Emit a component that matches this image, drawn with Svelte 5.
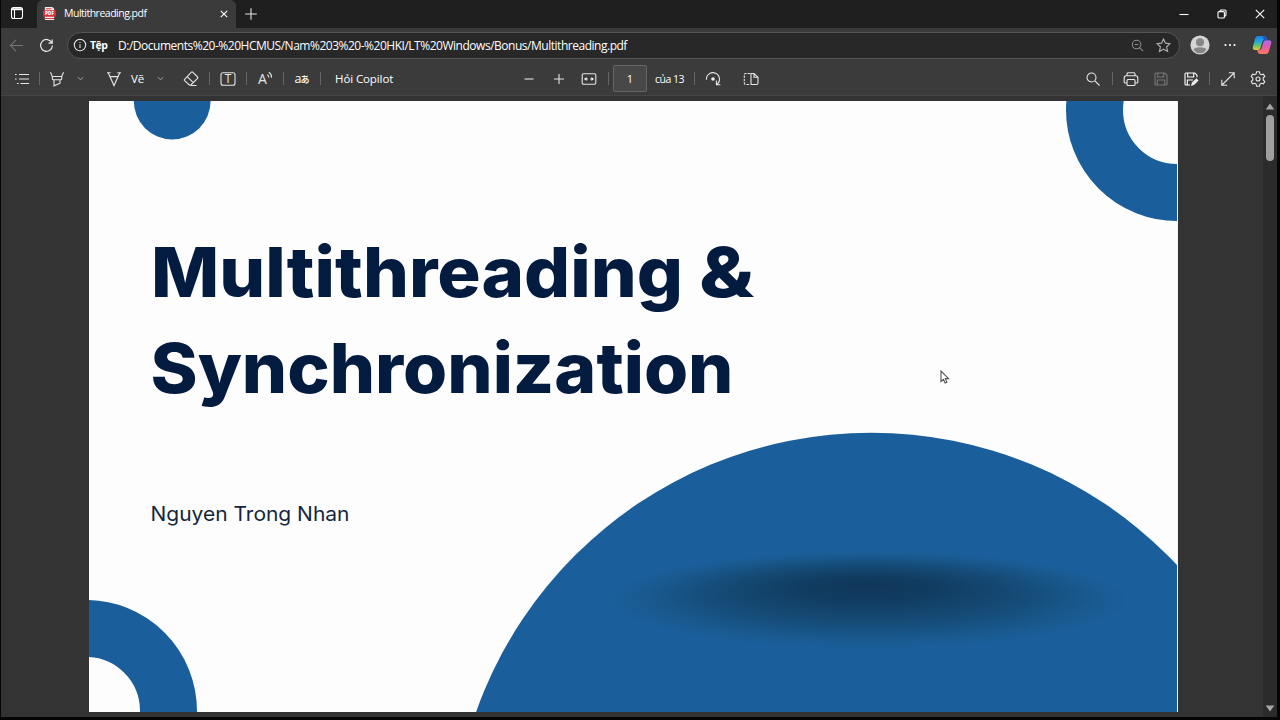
<script lang="ts">
    let fileName = "Multithreading.pdf";
    let url =
        "D:/Documents%20-%20HCMUS/Nam%203%20-%20HKI/LT%20Windows/Bonus/Multithreading.pdf";
    let page = "1";
    let pageCount = 13;
</script>

{#snippet chevron()}
    <svg class="chevron" viewBox="0 0 8 8"><path d="M1 2.5 4 5.5 7 2.5" /></svg>
{/snippet}

<div class="window">
    <header class="tabs">
        <div class="tab-actions">
            <svg class="icon bright" viewBox="0 0 16 16">
                <rect x="2.5" y="2.5" width="11" height="11" rx="2" />
                <path d="M3 4.2h10" stroke-width="2" />
                <path d="M5.5 5v8.5" />
            </svg>
        </div>
        <div class="tab">
            <svg class="pdf" viewBox="0 0 14 14">
                <path d="M2 0h8l2 2v12H2z" fill="#f5e9e9" />
                <path d="M3 2h6M2 12.5h10" stroke="#d33a40" />
                <rect y="3.5" width="14" height="7" rx="1" fill="#d92e3a" />
                <text x="7" y="8.9" text-anchor="middle">PDF</text>
            </svg>
            <span class="tab-title">{fileName}</span>
            <svg class="tab-close" viewBox="0 0 8 8"><path d="M.8.8 7.2 7.2M7.2.8.8 7.2" /></svg>
        </div>
        <svg class="new-tab" viewBox="0 0 12 12"><path d="M6 .2v11.6M.2 6h11.6" /></svg>
        <div class="controls">
            <svg viewBox="0 0 10 10"><path d="M.5 5.5h9" /></svg>
            <svg viewBox="0 0 10 10">
                <rect x="1" y="2.6" width="6.4" height="6.4" rx="1" />
                <path d="M3 2.4V2q0-1 1-1h4q1 0 1 1v4q0 1-1 1h-.4" />
            </svg>
            <svg viewBox="0 0 10 10"><path d="M.8.8 9.2 9.2M9.2.8.8 9.2" /></svg>
        </div>
    </header>

    <div class="address-row">
        <svg class="nav dim" viewBox="0 0 16 16"><path d="M15 8H1.5M7.5 2 1.5 8l6 6" /></svg>
        <svg class="nav" viewBox="0 0 16 16">
            <path d="M13.7 5.2A6.3 6.3 0 1 0 14.3 8M14.1 1.5v4h-4" stroke-width="1.3" />
        </svg>
        <div class="address">
            <svg class="info" viewBox="0 0 14 14">
                <circle cx="7" cy="7" r="5.7" />
                <path d="M7 6.3v3.6M7 4v1.1" />
            </svg>
            <span class="scheme">Tệp</span>
            <span class="url">{url}</span>
            <svg class="address-icon" viewBox="0 0 14 14">
                <circle cx="6" cy="6" r="4.6" />
                <path d="M9.3 9.3 13 13M4 6h4" />
            </svg>
            <svg class="address-icon star" viewBox="0 0 14 14">
                <path
                    d="M7 .9 8.8 4.8l4.3.5-3.2 2.9.9 4.3L7 10.4l-3.8 2.1.9-4.3L.9 5.3l4.3-.5z"
                />
            </svg>
        </div>
        <svg class="avatar" viewBox="0 0 20 20">
            <circle cx="10" cy="10" r="9.6" fill="#d4d4d4" />
            <circle cx="10" cy="7.3" r="4" fill="#858585" />
            <path d="M3.6 14.4Q5 12.2 10 12.2t6.4 2.2Q14 18.3 10 18.3t-6.4-3.9z" fill="#858585" />
        </svg>
        <svg class="more" viewBox="0 0 12 4">
            <circle cx="1.5" cy="2" r="1.1" />
            <circle cx="6" cy="2" r="1.1" />
            <circle cx="10.5" cy="2" r="1.1" />
        </svg>
        <svg class="copilot" viewBox="0 0 20 20">
            <defs>
                <linearGradient id="cool" x1="0" y1="0" x2="0" y2="1">
                    <stop offset="0" stop-color="#1b83e8" />
                    <stop offset=".4" stop-color="#23a9d8" />
                    <stop offset=".7" stop-color="#67c56c" />
                    <stop offset="1" stop-color="#e9cf35" />
                </linearGradient>
                <linearGradient id="warm" x1="0" y1="0" x2="0" y2="1">
                    <stop offset="0" stop-color="#ad6af0" />
                    <stop offset=".5" stop-color="#e45aab" />
                    <stop offset="1" stop-color="#fa7a56" />
                </linearGradient>
            </defs>
            <path
                d="M6 1h6.4q1.6 0 2.2 1.8l.8 2.5H12q-1.3 0-1.7 1.4L8.4 13q-.6 2-2.4 2H3Q.4 15 .8 12L3.2 3.2Q4 1 6 1z"
                fill="url(#cool)"
            />
            <path
                d="M14 19H8q-1.6 0-2.2-1.8L5 14.8h2.5q1.5 0 2-1.6l1.9-6.1Q12 5.2 14 5.2h3q2.8 0 2.2 3l-2.4 8.6Q16 19 14 19z"
                fill="url(#warm)"
            />
            <path d="M10.5 1h2q1.5 0 2.1 1.8l.8 2.5H12z" fill="#2355bf" />
        </svg>
    </div>

    <div class="toolbar">
        <div class="group left">
            <div class="tool">
                <svg class="icon" viewBox="0 0 16 16">
                    <path d="M5 3.5h10M5 8h10M6.5 12.5H15M1 3.5h1.6M1 8h1.6M3 12.5h1.6" />
                </svg>
            </div>
            <i class="sep narrow"></i>
            <div class="tool">
                <svg class="icon" viewBox="0 0 16 16">
                    <path d="M1.5 1.2 3.3 5.5h9.4l1.8-4.3M3.3 5.5v2.3q0 1 1 1h7.4q1 0 1-1V5.5M5 9v5.8l6-2.6V9" />
                </svg>
            </div>
            <div class="drop">{@render chevron()}</div>
            <div class="tool pen">
                <svg class="icon" viewBox="0 0 16 16">
                    <path d="M1 1.8h3.6M11.4 1.8H15M2.3 2l5.7 12.6L13.7 2M4 5.6h8" />
                </svg>
            </div>
            <span class="draw">Vẽ</span>
            <div class="drop">{@render chevron()}</div>
            <div class="tool eraser">
                <svg class="icon" viewBox="0 0 16 16">
                    <path d="M9.7 1.2 14.6 6q.6.7 0 1.3l-6.8 6.7q-.7.6-1.4 0L1.6 9.7q-.7-.7 0-1.4l6.8-7.1q.7-.6 1.3 0zM4.2 5.6l6.1 6.1M8 14.5h5.5" />
                </svg>
            </div>
            <i class="sep"></i>
            <div class="tool">
                <svg class="icon" viewBox="0 0 16 16">
                    <rect x="1" y="1.8" width="14" height="12.4" rx="2" />
                    <text class="letter" x="8" y="12.2" font-size="12" text-anchor="middle">T</text>
                </svg>
            </div>
            <i class="sep"></i>
            <div class="tool">
                <svg class="icon" viewBox="0 0 16 16">
                    <text class="letter" x="1" y="13.2" font-size="14">A</text>
                    <path d="M10.3 3.6q1.6 1.2 1.5 3M11.9 1.2q2.8 2 2.6 5.4" />
                </svg>
            </div>
            <i class="sep"></i>
            <div class="tool translate"><span>a</span><span class="kana">あ</span></div>
            <i class="sep"></i>
            <span class="ask">Hỏi Copilot</span>
        </div>

        <div class="group middle">
            <div class="tool wide">
                <svg class="icon" viewBox="0 0 16 16"><path d="M3.5 8h9" /></svg>
            </div>
            <div class="tool wide">
                <svg class="icon" viewBox="0 0 16 16"><path d="M8 3v10M3 8h10" /></svg>
            </div>
            <div class="tool wide">
                <svg class="icon" viewBox="0 0 16 16">
                    <rect x="1.2" y="2.7" width="13.6" height="10.6" rx="1.2" />
                    <path d="M3.8 8h3M9.2 8h3" />
                    <path d="M3 8 5.6 5.9v4.2zM13 8l-2.6-2.1v4.2z" class="solid" />
                </svg>
            </div>
            <i class="sep"></i>
            <div class="page-number">{page}</div>
            <span class="page-count">của {pageCount}</span>
            <i class="sep"></i>
            <div class="tool">
                <svg class="icon" viewBox="0 0 16 16">
                    <path d="M1.5 8.8A6.5 6.5 0 1 1 11.8 13.4M11.4 9.6v4.2h4" />
                    <circle cx="8" cy="8" r="1.8" class="solid" />
                </svg>
            </div>
            <div class="tool view">
                <svg class="icon" viewBox="0 0 16 16">
                    <path d="M7 2.5H3Q1.3 2.5 1.3 4v8q0 1.5 1.7 1.5h4" stroke-dasharray="2.4 1" />
                    <path d="M8 2.5h3l4 3.8V12q0 1.5-1.6 1.5H8zM11 2.5v3.8h4" />
                </svg>
            </div>
        </div>

        <div class="group right">
            <div class="tool wide">
                <svg class="icon" viewBox="0 0 16 16">
                    <circle cx="6.5" cy="6.5" r="4.5" />
                    <path d="m9.9 9.9 4.6 4.6" />
                </svg>
            </div>
            <i class="sep print-sep"></i>
            <div class="tool wide">
                <svg class="icon" viewBox="0 0 16 16">
                    <path d="M4 4.8V3q0-1.2 1-1.2h6q1 0 1 1.2v1.8M4 12H2.2q-1 0-1-1V7q0-2.2 2-2.2h9.6q2 0 2 2.2v4q0 1-1 1H12" />
                    <rect x="4" y="8.5" width="8" height="6" rx="1" />
                </svg>
            </div>
            <div class="tool wide faded">
                <svg class="icon" viewBox="0 0 16 16">
                    <path d="M2 3q0-1 1-1h8.8L14 4.2V13q0 1-1 1H3q-1 0-1-1zM4.7 2v4h6V2M4.3 14V9h7.4v5" />
                </svg>
            </div>
            <div class="tool wide">
                <svg class="icon bright" viewBox="0 0 16 16">
                    <path d="M7 14H3q-1 0-1-1V3q0-1 1-1h8.8L14 4.2v2M4.7 2v4h6V2M4.3 14V9H10" />
                    <path d="m8 15 .8-3.2 4.6-4.6 2.2 2.2-4.6 4.6z" class="solid" />
                </svg>
            </div>
            <i class="sep narrow"></i>
            <div class="tool wide">
                <svg class="icon" viewBox="0 0 16 16">
                    <path d="M2 14 14 2M8.8 1.8h5.4v5.4M1.8 8.8v5.4h5.4" />
                </svg>
            </div>
            <div class="tool wide">
                <svg class="icon" viewBox="0 0 16 16">
                    <path
                        d="M6.6.8h2.8l.5 2.1 1.4.8 2.1-.6 1.4 2.4-1.6 1.6v1.8l1.6 1.6-1.4 2.4-2.1-.6-1.4.8-.5 2.1H6.6l-.5-2.1-1.4-.8-2.1.6-1.4-2.4 1.6-1.6V7.1L1.2 5.5l1.4-2.4 2.1.6 1.4-.8z"
                    />
                    <circle cx="8" cy="8" r="2" />
                </svg>
            </div>
        </div>
    </div>

    <main class="viewer">
        <svg class="slide" viewBox="0 0 1088 611">
            <defs>
                <radialGradient id="shade" cx=".5" cy=".5" r=".5" fx=".495" fy=".34">
                    <stop offset="0" stop-color="#10375a" />
                    <stop offset=".25" stop-color="#113c61" />
                    <stop offset=".6" stop-color="#154c78" />
                    <stop offset=".85" stop-color="#19598f" />
                    <stop offset="1" stop-color="#1a5f9b" />
                </radialGradient>
            </defs>
            <g fill="#1a5f9b">
                <circle cx="83.2" cy="0" r="38.4" />
                <circle cx="782.3" cy="751" r="419.3" />
            </g>
            <g fill="none" stroke="#1a5f9b" stroke-width="57">
                <circle cx="1088" cy="9" r="82.5" />
                <circle cx="-3" cy="610" r="82.5" />
            </g>
            <ellipse cx="780" cy="499" rx="260" ry="49" fill="url(#shade)" />
            <g class="title">
                <text x="62" y="195.5" textLength="532" lengthAdjust="spacingAndGlyphs">Multithreading</text>
                <text x="610" y="195.5" textLength="55" lengthAdjust="spacingAndGlyphs">&amp;</text>
                <text x="61.5" y="291.5" textLength="583" lengthAdjust="spacingAndGlyphs">Synchronization</text>
            </g>
            <text class="author" x="61.5" y="420" textLength="199" lengthAdjust="spacingAndGlyphs">Nguyen Trong Nhan</text>
        </svg>
        <div class="scrollbar">
            <svg class="arrow" viewBox="0 0 10 7"><path d="M5 .5 9.3 6.5H.7z" /></svg>
            <div class="thumb"></div>
            <svg class="arrow down" viewBox="0 0 10 7"><path d="M5 6.5 9.3.5H.7z" /></svg>
        </div>
        <svg class="cursor" viewBox="0 0 10 14">
            <path d="M1 1v10.5l2.5-2.2 1.6 3.6 1.8-.8-1.6-3.5h3.3z" />
        </svg>
    </main>
</div>

<style>
    :global(body) {
        margin: 0;
        overflow: hidden;
        background: #000;
    }

    .window {
        box-sizing: border-box;
        width: 1280px;
        height: 720px;
        display: flex;
        flex-direction: column;
        border: solid #050505;
        border-width: 0 3px 3px 1px;
        background: #3b3b3b;
        color: #fff;
        font-family: "Open Sans", "Noto Sans", sans-serif;
        font-size: 11px;
    }

    svg {
        display: block;
        flex: none;
        fill: none;
        stroke: #e6e6e6;
        stroke-width: 1.1;
    }

    text {
        stroke: none;
    }

    .icon {
        width: 16px;
        height: 16px;
    }

    .bright {
        stroke: #fff;
    }

    .solid {
        fill: #eee;
        stroke: none;
    }

    /* Tab strip */
    .tabs {
        height: 28px;
        flex: none;
        box-sizing: border-box;
        padding-bottom: 1px;
        display: flex;
        align-items: center;
        background: #1f1f1f;
    }

    .tab-actions {
        width: 36px;
        height: 27px;
        box-sizing: border-box;
        padding: 5px 0 0 8px;
    }

    .tab {
        width: 199px;
        height: 28px;
        margin-bottom: -1px;
        box-sizing: border-box;
        padding: 0 8px 1px 6px;
        display: flex;
        align-items: center;
        background: #3b3b3b;
        border-radius: 6px 6px 0 0;
    }

    .pdf {
        width: 13px;
        height: 13px;
        stroke: none;
    }

    .pdf text {
        fill: #fff;
        font-size: 5px;
        font-weight: 800;
    }

    .tab-title {
        flex: 1;
        margin: -1px 0 0 8px;
        font-size: 10.5px;
        letter-spacing: -0.5px;
        white-space: nowrap;
    }

    .tab-close {
        width: 8px;
        height: 8px;
        stroke: #fff;
    }

    .new-tab {
        width: 12px;
        height: 12px;
        margin-left: 9px;
    }

    .controls {
        margin: 1px 12px 0 auto;
        display: flex;
        gap: 28px;
    }

    .controls svg {
        width: 10px;
        height: 10px;
        stroke: #fff;
    }

    /* Address row */
    .address-row {
        height: 35px;
        flex: none;
        box-sizing: border-box;
        padding: 0 0 1px 8px;
        display: flex;
        align-items: center;
    }

    .nav {
        width: 15px;
        height: 15px;
        margin-right: 15px;
    }

    .dim {
        stroke: #777;
    }

    .address {
        width: 1113px;
        height: 27px;
        margin-left: -2px;
        box-sizing: border-box;
        padding: 0 8px 0 5px;
        display: flex;
        align-items: center;
        border: 1px solid #555;
        border-radius: 14px;
        background: #282828;
    }

    .info {
        width: 14px;
        height: 14px;
    }

    .scheme {
        width: 28px;
        margin-left: 3px;
        font-size: 10.5px;
        font-weight: 700;
        letter-spacing: -0.5px;
    }

    .url {
        flex: 1;
        font-size: 12px;
        letter-spacing: -0.48px;
        white-space: nowrap;
    }

    .address-icon {
        width: 13px;
        height: 13px;
        stroke: #8e8e8e;
    }

    .star {
        width: 15px;
        height: 15px;
        margin-left: 12px;
        stroke: #aaa;
    }

    .avatar {
        width: 20px;
        height: 20px;
        margin-left: 10px;
        stroke: none;
    }

    .more {
        width: 12px;
        height: 4px;
        margin-left: 14px;
        fill: #fff;
        stroke: none;
    }

    .copilot {
        width: 20px;
        height: 20px;
        margin-left: 16px;
        stroke: none;
    }

    /* PDF toolbar */
    .toolbar {
        height: 33px;
        flex: none;
        box-sizing: border-box;
        padding-bottom: 1px;
        display: grid;
        grid-template-columns: 513px 1fr auto;
        border-bottom: 1px solid #454545;
    }

    .group {
        display: flex;
        align-items: center;
        white-space: nowrap;
    }

    .left {
        padding-left: 7px;
    }

    .right {
        padding-right: 4px;
    }

    .tool {
        width: 28px;
        flex: none;
        display: flex;
        justify-content: center;
        align-items: center;
    }

    .wide {
        width: 30px;
    }

    .faded {
        opacity: 0.35;
    }

    .letter {
        fill: #e6e6e6;
    }

    .sep {
        width: 9px;
        height: 13px;
        flex: none;
        background: linear-gradient(#666, #666) center / 1px 100% no-repeat;
    }

    .narrow {
        width: 7px;
    }

    .print-sep {
        width: 8px;
    }

    .drop {
        width: 18px;
        display: flex;
        justify-content: center;
    }

    .chevron {
        width: 7px;
        height: 7px;
        stroke: #aaa;
    }

    .pen {
        margin-left: 11px;
    }

    .draw {
        width: 20px;
        margin-left: 3px;
        font-size: 11.5px;
    }

    .eraser {
        margin-left: 8px;
    }

    .translate {
        font-size: 12.5px;
        line-height: 14px;
    }

    .kana {
        margin: 2px 0 0 -1px;
        font-family: "Noto Sans CJK JP", sans-serif;
        font-size: 9px;
        font-weight: 500;
    }

    .ask {
        margin-left: 10px;
        font-size: 11.5px;
        letter-spacing: -0.1px;
    }

    .page-number {
        width: 34px;
        height: 27px;
        box-sizing: border-box;
        border: 1px solid #666;
        border-radius: 2px;
        background: #484848;
        line-height: 25px;
        text-align: center;
    }

    .page-count {
        width: 35px;
        margin-left: 8px;
        font-size: 10.5px;
        letter-spacing: -0.5px;
    }

    .view {
        margin-left: 10px;
    }

    /* Document area */
    .viewer {
        flex: 1;
        min-height: 0;
        position: relative;
        box-sizing: border-box;
        padding: 5px 0 0 88px;
        display: flex;
        justify-content: space-between;
        background: #333;
    }

    .slide {
        width: 1088px;
        height: 611px;
        overflow: hidden;
        border-right: 1px solid #f2f2f2;
        background: #fdfdfd;
        stroke: none;
    }

    .title {
        fill: #031b3e;
        font-family: Inter, sans-serif;
        font-size: 69px;
        font-weight: 800;
    }

    .author {
        fill: #14263f;
        font-family: Inter, sans-serif;
        font-size: 20px;
    }

    .scrollbar {
        width: 14px;
        height: 621px;
        margin-top: -5px;
        box-sizing: border-box;
        padding: 7px 0 5px;
        display: flex;
        flex-direction: column;
        align-items: center;
        background: #2b2b2b;
    }

    .arrow {
        width: 10px;
        height: 7px;
        fill: #a6a6a6;
        stroke: none;
    }

    .thumb {
        width: 8px;
        height: 46px;
        margin-top: 5px;
        border-radius: 4px;
        background: #9f9f9f;
    }

    .down {
        margin-top: auto;
    }

    .cursor {
        position: absolute;
        left: 939px;
        top: 274px;
        width: 10px;
        height: 14px;
        fill: #fff;
        stroke: #555;
    }
</style>
